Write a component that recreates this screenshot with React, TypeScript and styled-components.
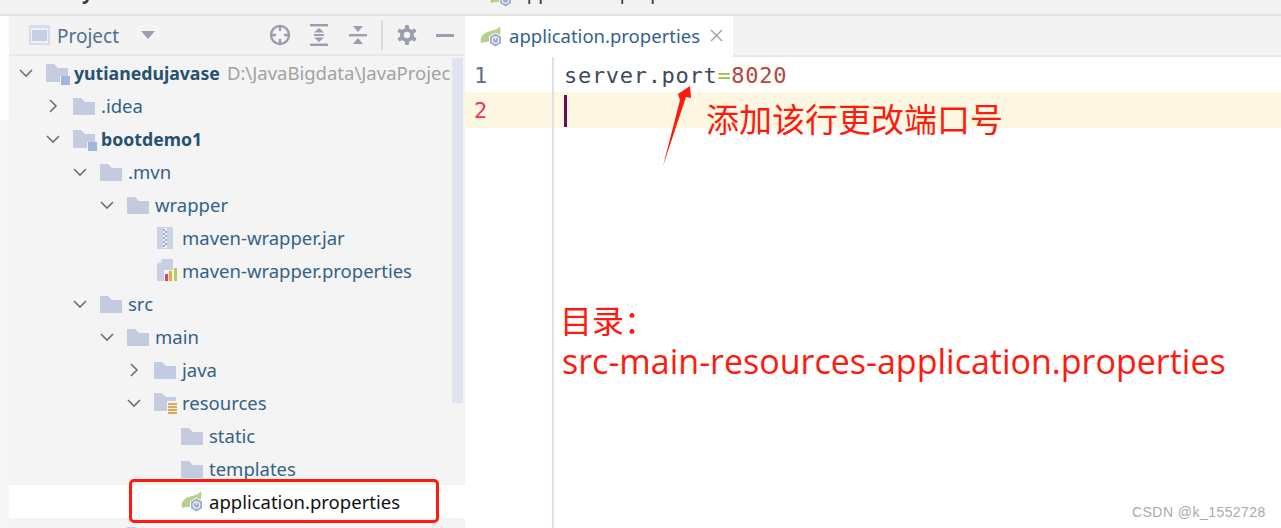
import React from "react";
import styled, { createGlobalStyle } from "styled-components";

const Global = createGlobalStyle`
  html, body { margin: 0; padding: 0; background: #fff; }
  #root { width: 1281px; height: 528px; overflow: hidden; }
`;
const UI = `"Noto Sans", "Liberation Sans", sans-serif`;
const CJK = `"Open Sans", "Noto Sans CJK SC", sans-serif`;

const Page = styled.div`
  position: relative; width: 1281px; height: 528px; overflow: hidden;
  display: flex; flex-direction: column; background: #fff; font-family: ${UI};
`;
const TopStrip = styled.div`
  height: 14px; flex: none; background: #f3f3f3; border-bottom: 2px solid #e2e2e2;
  overflow: hidden; display: flex; color: #3a3a3a; font-size: 19px; line-height: 20px;
`;
const Crumb = styled.span<{ $w: number; $bold?: boolean }>`
  width: ${(p) => p.$w}px; flex: none; margin-top: -18px; white-space: nowrap;
  font-weight: ${(p) => (p.$bold ? 700 : 400)};
`;
const CrumbIcon = styled.span`width: 26px; flex: none; margin-top: -14px;`;
const Slash = styled.span`color: #a8a8a8;`;
const Main = styled.div`flex: 1; display: flex; min-height: 0;`;
const Edge = styled.div`width: 9px; flex: none; background: linear-gradient(#fdfdfd 0 104px, #f6f6f6 104px);`;
const Panel = styled.div`width: 456px; flex: none; display: flex; flex-direction: column; background: #f4f4f4;`;
const PanelHead = styled.div`
  height: 38px; flex: none; display: flex; align-items: center; padding-left: 20px;
  border-bottom: 2px solid #e8e8e8; background: #f3f3f4;
`;
const HeadTitle = styled.span`
  font-size: 19px; color: #50718f; margin: 1px 0 0 7px; width: 84px;
`;
const Tools = styled.div`margin-left: 114px; display: flex; align-items: center;`;
const ToolGap = styled.span<{ $w: number }>`width: ${(p) => p.$w}px; flex: none;`;
const ToolSep = styled.div`width: 2px; height: 30px; background: #dcdcdc; margin: 0 14px 0 14px;`;
const TreeWrap = styled.div`flex: 1; position: relative; min-height: 0; overflow: hidden;`;
const Row = styled.div<{ $sel?: boolean }>`
  height: 33px; position: relative; display: flex; align-items: center;
  background: ${(p) => (p.$sel ? "#fff" : "transparent")};
  width: 100%; white-space: nowrap;
`;
const RowInner = styled.div<{ $level: number }>`
  display: flex; align-items: center; padding-left: ${(p) => 28 + p.$level * 27}px; overflow: hidden; width: 441px; box-sizing: border-box;
`;
const IconSlot = styled.span`width: 28px; flex: none; display: flex; align-items: center;`;
const ChevSlot = styled.span`width: 9px; flex: none; position: relative; height: 20px;`;
const ChevAbs = styled.span`position: absolute; left: -18px; top: 3px; display: flex;`;
const Label = styled.span<{ $bold?: boolean; $sel?: boolean }>`
  font-size: ${(p) => (p.$bold ? 17.7 : 18.5)}px; line-height: 24px;
  color: ${(p) => (p.$sel ? "#111" : p.$bold ? "#28506f" : "#336288")};
  font-weight: ${(p) => (p.$bold ? 700 : 400)};
`;
const Hint = styled.span`font-size: 18.5px; color: #a2a2a2; margin-left: 7px;`;
const Scroll = styled.div`
  position: absolute; left: 443px; top: 2px; width: 11px; height: 345px; background: #e0e3f0;
`;
const Editor = styled.div`flex: 1; display: flex; flex-direction: column; min-width: 0;`;
const TabBar = styled.div`height: 41px; flex: none; display: flex; background: #f3f3f4; box-shadow: inset 0 -2px 0 #e8e8e8;`;
const Tab = styled.div`
  width: 268px; height: 41px; background: #fff; display: flex; align-items: center; padding-left: 15px; box-sizing: border-box;
`;
const TabName = styled.span`font-size: 18.5px; color: #336288; margin: -2px 0 0 5px;`;
const TabClose = styled.span`margin-left: 10px; display: flex; margin-top: -2px;`;
const Line = styled.div<{ $active?: boolean; $h: number }>`
  height: ${(p) => p.$h}px; flex: none; display: flex; background: ${(p) => (p.$active ? "#fef8e3" : "#fff")};
`;
const Filler = styled.div`flex: 1; display: flex;`;
const Gutter = styled.div<{ $active?: boolean }>`
  width: 89px; flex: none; box-sizing: border-box; border-right: 2px solid #dde1ef; padding-left: 9px;
  font: 22px/38px "DejaVu Sans Mono", monospace;
  color: ${(p) => (p.$active ? "#f0306a" : "#5f6f8f")};
`;
const Code = styled.div`
  padding-left: 10px; font: 22px/37px "DejaVu Sans Mono", monospace; letter-spacing: 0.7px; color: #3f4b5c; white-space: pre;
`;
const Eq = styled.span`color: #8fc63f;`;
const Num = styled.span`color: #b0444f; background: #fffdf4;`;
const Caret = styled.div`width: 3px; height: 32px; background: #660e50; margin: 3px 0 0 10px;`;
const Overlay = styled.svg`position: absolute; left: 0; top: 0; pointer-events: none;`;
const RedRect = styled.div`
  position: absolute; left: 129px; top: 479px; width: 304px; height: 38px;
  border: 3px solid #ff1a0e; border-radius: 5px;
`;
const Note = styled.div<{ $x: number; $y: number; $size: number }>`
  position: absolute; left: ${(p) => p.$x}px; top: ${(p) => p.$y}px; font: ${(p) => p.$size}px/1 ${CJK};
  color: #ff1a0e; white-space: nowrap;
`;
const Water = styled.div`
  position: absolute; left: 1132px; top: 503px; font: 14px/18px "Liberation Sans", sans-serif; letter-spacing: 0.45px; color: #aaa; white-space: nowrap;
`;

const Folder = ({ fill = "#c4cbdf" }: { fill?: string }) => (
  <svg width="22" height="18" viewBox="0 0 22 18" fill={fill}><path d="M0 1h8l4 4h10v13H0z" /></svg>
);
const ModuleFolder = () => (
  <svg width="24" height="21" viewBox="0 0 24 21" style={{ marginBottom: -3 }}>
    <path d="M0 0h8l4 4h10v14H0z" fill="#c6cce0" />
    <rect x="14" y="12" width="9" height="9" fill="#f4f4f4" />
    <rect x="15" y="12" width="9" height="9" fill="#a3b6db" />
  </svg>
);
const ResFolder = () => (
  <svg width="24" height="21" viewBox="0 0 24 21" style={{ marginBottom: -2 }}>
    <path d="M0 0h8l4 4h10v14H0z" fill="#c6cce0" />
    <rect x="13" y="8" width="10" height="13" fill="#f4f4f4" />
    <g fill="#e0a94a"><rect x="14" y="10" width="9" height="2" /><rect x="14" y="13" width="9" height="2" /><rect x="14" y="16" width="9" height="2" /><rect x="14" y="19" width="9" height="2" /></g>
  </svg>
);
const Jar = () => (
  <svg width="20" height="22" viewBox="0 0 20 22" style={{ marginLeft: 3 }}>
    <rect x="0" y="0" width="16" height="22" fill="#cbd2e4" />
    <path d="M6 1h4v20H6z" fill="#eef0f6" />
    <path d="M6 2h2v2H6zm2 2h2v2H8zM6 6h2v2H6zm2 2h2v2H8zm-2 2h2v2H6zm2 2h2v2H8zm-2 2h2v2H6zm2 2h2v2H8zm-2 2h2v2H6z" fill="#9daccc" />
  </svg>
);
const PropsIcon = () => (
  <svg width="21" height="24" viewBox="0 0 21 24" style={{ marginLeft: 3, marginTop: -1 }}>
    <path d="M5 1h11v22H0V6z" fill="#c8cfe2" />
    <path d="M0 5l5-5v5z" fill="#e4e7ef" />
    <rect x="7" y="12" width="14" height="12" fill="#f4f4f4" />
    <rect x="8" y="16" width="3" height="7" fill="#ec3a63" />
    <rect x="12" y="13" width="3" height="10" fill="#f0a93c" />
    <rect x="17" y="10" width="3" height="13" fill="#b4cc62" />
  </svg>
);
const Spring = () => (
  <svg width="24" height="21" viewBox="0 0 24 21">
    <path d="M1 17C-1 10 5 6 11 5 15 4 18 3 20 0c1 6 0 10-2 13-3 3-9 3-13 3-1 0-3 1-4 1z" fill="#b7d08c" />
    <path d="M15.5 7l6 3.5v7l-6 3.5-6-3.5v-7z" fill="#9faccb" stroke="#fff" strokeWidth="1" />
    <circle cx="15.5" cy="14" r="3.2" fill="none" stroke="#eef0f6" strokeWidth="1.3" />
    <path d="M15.5 11v3" stroke="#eef0f6" strokeWidth="1.2" />
  </svg>
);
const Chevron = ({ open }: { open: boolean }) => (
  <svg width="14" height="14" viewBox="0 0 14 14" fill="none" stroke="#6f6f6f" strokeWidth="1.6">
    {open ? <path d="M1 4l6 6 6-6" /> : <path d="M4 1l6 6-6 6" />}
  </svg>
);
const gray = "#9b9db0";
const Crosshair = () => (
  <svg width="22" height="22" viewBox="0 0 22 22" fill="none" stroke={gray} strokeWidth="2.4">
    <circle cx="11" cy="11" r="9" />
    <path d="M11 1v6M11 15v6M1 11h6M15 11h6" />
  </svg>
);
const Expand = () => (
  <svg width="18" height="22" viewBox="0 0 18 22" fill={gray}>
    <rect y="0" width="18" height="2.4" /><rect y="19.6" width="18" height="2.4" />
    <path d="M9 4l5 4.5H4zM9 18l-5-4.5h10z" /><rect x="4" y="10" width="10" height="2" />
  </svg>
);
const Collapse = () => (
  <svg width="18" height="22" viewBox="0 0 18 22" fill={gray}>
    <rect y="10" width="18" height="2.4" />
    <path d="M4 2h10L9 8zM4 20h10l-5-6z" />
  </svg>
);
const Gear = () => (
  <svg width="20" height="20" viewBox="0 0 20 20">
    <g fill={gray}>
      <circle cx="10" cy="10" r="7" />
      <rect x="8" y="0" width="4" height="20" rx="1" />
      <rect x="8" y="0" width="4" height="20" rx="1" transform="rotate(60 10 10)" />
      <rect x="8" y="0" width="4" height="20" rx="1" transform="rotate(120 10 10)" />
    </g>
    <circle cx="10" cy="10" r="3.2" fill="#f3f3f4" />
  </svg>
);
const WindowIcon = () => (
  <svg width="21" height="20" viewBox="0 0 21 20">
    <rect width="21" height="20" fill="#d9dce8" /><rect x="2" y="3" width="17" height="15" fill="#f0f1f6" /><rect x="3" y="5" width="15" height="11" fill="#c6cee3" />
  </svg>
);

type Item = { level: number; label: string; chev?: boolean; open?: boolean; icon: React.ReactNode; bold?: boolean; hint?: string; sel?: boolean };
const items: Item[] = [
  { level: 0, label: "yutianedujavase", chev: true, open: true, icon: <ModuleFolder />, bold: true, hint: "D:\\JavaBigdata\\JavaProject" },
  { level: 1, label: ".idea", chev: true, open: false, icon: <Folder /> },
  { level: 1, label: "bootdemo1", chev: true, open: true, icon: <ModuleFolder />, bold: true },
  { level: 2, label: ".mvn", chev: true, open: true, icon: <Folder /> },
  { level: 3, label: "wrapper", chev: true, open: true, icon: <Folder /> },
  { level: 4, label: "maven-wrapper.jar", icon: <Jar /> },
  { level: 4, label: "maven-wrapper.properties", icon: <PropsIcon /> },
  { level: 2, label: "src", chev: true, open: true, icon: <Folder /> },
  { level: 3, label: "main", chev: true, open: true, icon: <Folder /> },
  { level: 4, label: "java", chev: true, open: false, icon: <Folder fill="#c1cce4" /> },
  { level: 4, label: "resources", chev: true, open: true, icon: <ResFolder /> },
  { level: 5, label: "static", icon: <Folder /> },
  { level: 5, label: "templates", icon: <Folder /> },
  { level: 5, label: "application.properties", icon: <Spring />, sel: true },
  { level: 3, label: "test", chev: true, open: false, icon: <Folder /> },
];

export default function App() {
  return (
    <Page>
      <Global />
      <TopStrip>
        <Crumb $w={82} />
        <Crumb $w={61} $bold>y</Crumb>
        <Crumb $w={127}><Slash>/</Slash></Crumb>
        <Crumb $w={45}><Slash>/</Slash></Crumb>
        <Crumb $w={65}><Slash>/</Slash></Crumb>
        <Crumb $w={110}><Slash>/</Slash></Crumb>
        <CrumbIcon><Spring /></CrumbIcon>
        <Crumb $w={300}>application.properties</Crumb>
      </TopStrip>
      <Main>
        <Edge />
        <Panel>
          <PanelHead>
            <WindowIcon />
            <HeadTitle>Project</HeadTitle>
            <svg width="14" height="8" viewBox="0 0 14 8" fill={gray}><path d="M0 0h14L7 8z" /></svg>
            <Tools>
              <Crosshair />
              <ToolGap $w={19} />
              <Expand />
              <ToolGap $w={21} />
              <Collapse />
              <ToolSep />
              <Gear />
              <ToolGap $w={19} />
              <svg width="18" height="3" viewBox="0 0 18 3" fill={gray}><rect width="18" height="3" /></svg>
            </Tools>
          </PanelHead>
          <TreeWrap>
            <Scroll />
            {items.map((it) => (
              <Row key={it.label} $sel={it.sel}>
                <RowInner $level={it.level}>
                  <ChevSlot>{it.chev && <ChevAbs><Chevron open={!!it.open} /></ChevAbs>}</ChevSlot>
                  <IconSlot>{it.icon}</IconSlot>
                  <Label $bold={it.bold} $sel={it.sel}>{it.label}</Label>
                  {it.hint && <Hint>{it.hint}</Hint>}
                </RowInner>
              </Row>
            ))}
          </TreeWrap>
        </Panel>
        <Editor>
          <TabBar>
            <Tab>
              <Spring />
              <TabName>application.properties</TabName>
              <TabClose>
                <svg width="13" height="13" viewBox="0 0 13 13" stroke="#9aa0ae" strokeWidth="1.4"><path d="M1 1l11 11M12 1L1 12" /></svg>
              </TabClose>
            </Tab>
          </TabBar>
          <Line $h={35}>
            <Gutter>1</Gutter>
            <Code>server.port<Eq>=</Eq><Num>8020</Num></Code>
          </Line>
          <Line $h={36} $active>
            <Gutter $active>2</Gutter>
            <Caret />
          </Line>
          <Filler><Gutter /></Filler>
        </Editor>
      </Main>
      <Overlay width="1281" height="528" viewBox="0 0 1281 528">
        <polygon points="663,166 680,100 678,94 690,86 691,98 686,97" fill="#ff1a0e" />
      </Overlay>
      <RedRect />
      <Note $x={706} $y={103} $size={33}>添加该行更改端口号</Note>
      <Note $x={560} $y={305} $size={32}>目录：</Note>
      <Note $x={562} $y={344} $size={34}>src-main-resources-application.properties</Note>
      <Water>CSDN @k_1552728</Water>
    </Page>
  );
}
